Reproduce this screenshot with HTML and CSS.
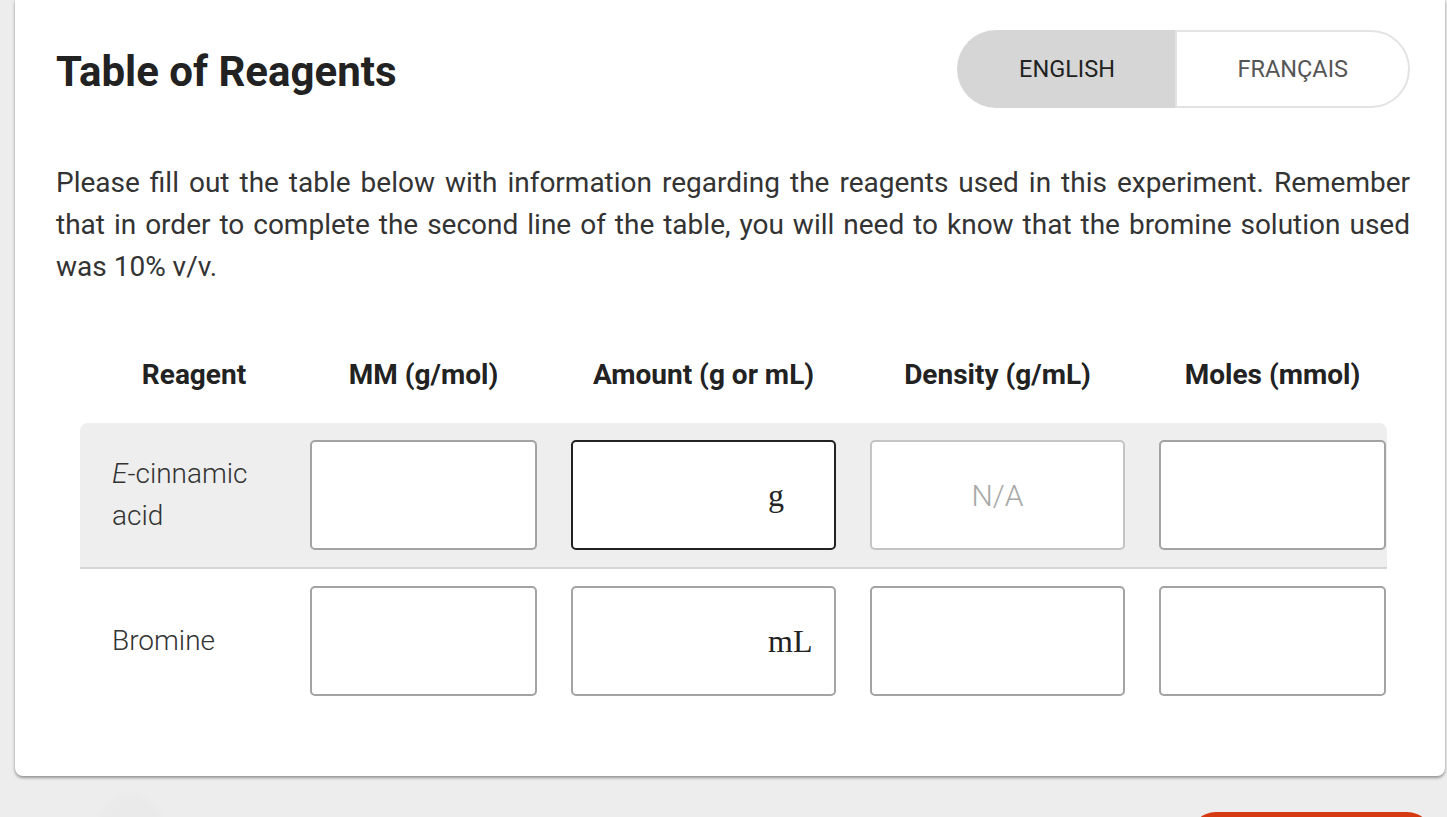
FILE: index.html
```html
<!DOCTYPE html>
<html lang="en">
<head>
<meta charset="utf-8">
<title>Table of Reagents</title>
<link rel="stylesheet" href="styles.css">
</head>
<body>
<main class="card">
  <header class="card-header">
    <h1 class="title">Table of Reagents</h1>
    <div class="lang-toggle">
      <button class="lang lang-active">ENGLISH</button>
      <button class="lang">FRANÇAIS</button>
    </div>
  </header>
  <p class="intro">Please fill out the table below with information regarding the reagents used in this experiment. Remember that in order to complete the second line of the table, you will need to know that the bromine solution used was 10% v/v.</p>
  <div class="reagent-table">
    <div class="trow thead">
      <div class="th">Reagent</div>
      <div class="th">MM (g/mol)</div>
      <div class="th">Amount (g or mL)</div>
      <div class="th">Density (g/mL)</div>
      <div class="th">Moles (mmol)</div>
    </div>
    <div class="trow tbody-row shaded">
      <div class="label"><em>E</em>-cinnamic acid</div>
      <div class="field"></div>
      <div class="field focused with-unit"><span class="unit">g</span></div>
      <div class="field disabled"><span class="na">N/A</span></div>
      <div class="field"></div>
    </div>
    <div class="trow tbody-row">
      <div class="label">Bromine</div>
      <div class="field"></div>
      <div class="field with-unit"><span class="unit">mL</span></div>
      <div class="field"></div>
      <div class="field"></div>
    </div>
  </div>
</main>
<footer class="page-footer">
  <div class="round-btn"></div>
  <div class="next-btn"></div>
</footer>
</body>
</html>
```

FILE: styles.css
```css
* { box-sizing: border-box; }

html, body {
  margin: 0;
  padding: 0;
}

body {
  background: #ededed;
  font-family: Roboto, "Liberation Sans", sans-serif;
  color: #333;
  overflow: hidden;
  height: 817px;
}

.card {
  margin: 0 2px 0 15px;
  background: #fff;
  border-radius: 0 0 8px 8px;
  box-shadow: 0 2px 3px rgba(0, 0, 0, 0.35), 0 0 4px rgba(0, 0, 0, 0.08);
  padding: 30px 35px 63px 41px;
}

.card-header {
  display: flex;
  justify-content: space-between;
  align-items: flex-start;
}

.title {
  margin: 17px 0 0 0;
  font-size: 42px;
  line-height: 50px;
  font-weight: 700;
  color: #222;
}

.lang-toggle {
  display: flex;
  height: 78px;
}

.lang {
  font-family: Roboto, "Liberation Sans", sans-serif;
  font-size: 23.5px;
  padding: 0 60px;
  border: 2px solid #e3e3e3;
  background: #fff;
  color: #555;
  cursor: pointer;
}

.lang:first-child {
  border-radius: 39px 0 0 39px;
  border-right: none;
  padding: 0 60.5px;
}

.lang:last-child {
  border-radius: 0 39px 39px 0;
}

.lang-active {
  background: #d6d6d6;
  border-color: #d6d6d6;
  color: #222;
}

.intro {
  margin: 54px 0 0 0;
  font-size: 28px;
  line-height: 42px;
  text-align: justify;
  color: #333;
}

.reagent-table {
  margin: 66px 23px 0 24px;
}

.trow {
  display: grid;
  grid-template-columns: 164px 227px 265px 255px 227px;
  column-gap: 34px;
  padding-left: 32px;
}

.thead {
  margin-bottom: 27px;
}

.th {
  text-align: center;
  font-weight: 700;
  font-size: 28px;
  line-height: 42px;
  color: #222;
  white-space: nowrap;
}

.tbody-row {
  padding-top: 17px;
  padding-bottom: 17px;
}

.shaded {
  background: #eeeeee;
  border-radius: 8px 8px 0 0;
  border-bottom: 2px solid #d6d6d6;
}

.label {
  align-self: center;
  font-size: 28px;
  line-height: 42px;
  font-weight: 300;
  color: #333;
}

.label em {
  font-style: italic;
}

.field {
  height: 110px;
  background: #fff;
  border: 2px solid #a3a3a3;
  border-radius: 5px;
  display: flex;
  align-items: center;
}

.field.with-unit {
  justify-content: flex-start;
  padding-left: 195px;
}

.field.focused {
  border-color: #222;
}

.field.disabled {
  border-color: #c4c4c4;
  justify-content: center;
}

.unit {
  font-family: "Liberation Serif", "DejaVu Serif", serif;
  font-size: 32px;
  color: #222;
}

.na {
  font-size: 30px;
  font-weight: 300;
  color: #a8a8a8;
}

.page-footer {
  display: flex;
  justify-content: space-between;
  align-items: flex-start;
  padding: 0 14px 0 102px;
  height: 41px;
  overflow: hidden;
}

.round-btn {
  margin-top: 22px;
  width: 56px;
  height: 56px;
  border-radius: 50%;
  background: #eaeaea;
  box-shadow: 0 0 14px rgba(0, 0, 0, 0.03);
}

.next-btn {
  margin-top: 36px;
  width: 243px;
  height: 52px;
  border-radius: 26px;
  background: #d63a12;
}
```
